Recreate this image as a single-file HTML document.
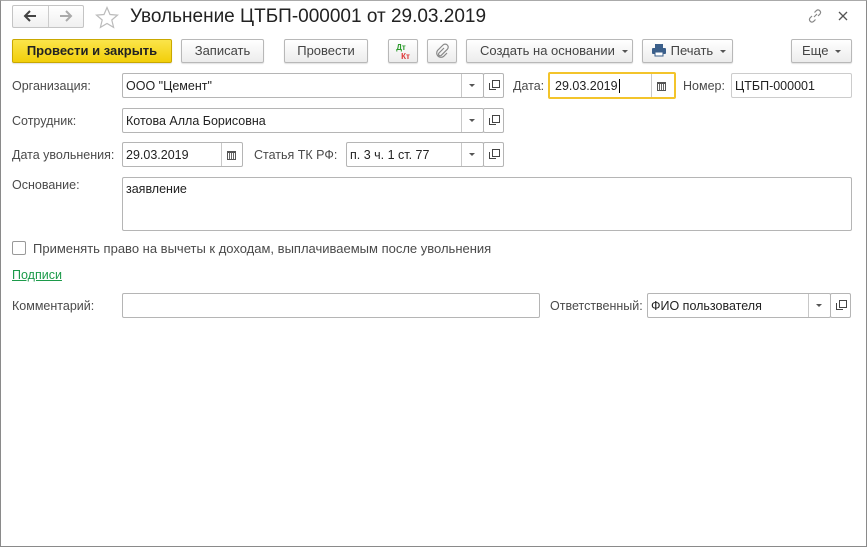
<!DOCTYPE html>
<html><head><meta charset="utf-8"><style>
*{box-sizing:border-box;margin:0;padding:0}
body{width:867px;height:547px;background:#fff;font-family:"Liberation Sans",Arial,sans-serif;font-size:12px;color:#333;position:relative;overflow:hidden}
.frame{position:absolute;left:0;top:0;width:867px;height:547px;border:1px solid #8a8a8a;border-top-color:#aaa}
.a{position:absolute}
.btn{position:absolute;top:39px;height:24px;border:1px solid #b8b8b8;border-radius:2px;background:linear-gradient(#fff,#ececec);text-align:center;line-height:22px;font-size:13px;color:#444;box-shadow:0 1px 1px rgba(0,0,0,.12)}
.inp{position:absolute;height:25px;border:1px solid #b5b5b5;border-radius:2px;background:#fff;line-height:25px;padding-left:3px;font-size:12.5px;color:#222}
.lbl{position:absolute;font-size:12.5px;color:#4a4a4a}
.sep{position:absolute;top:0;bottom:0;border-left:1px solid #c8c8c8}
.dd{position:absolute;top:10px;width:0;height:0;border-left:3px solid transparent;border-right:3px solid transparent;border-top:3px solid #555}
.ob{position:absolute;height:25px;width:21px;border:1px solid #b5b5b5;border-radius:2px;background:#fff}
.ob:before{content:"";position:absolute;left:8px;top:6px;width:6px;height:6px;border:1px solid #444}
.ob:after{content:"";position:absolute;left:5px;top:9px;width:6px;height:6px;border-left:1px solid #444;border-bottom:1px solid #444;background:transparent}
.cal{position:absolute;top:8px;width:9px;height:9px;border:1px solid #555;border-top-width:2px;background:repeating-linear-gradient(90deg,#fff 0 1px,#666 1px 2px)}
</style></head><body>
<div class="frame"></div>
<div class="a" style="left:12px;top:5px;width:72px;height:23px;border:1px solid #c4c4c4;border-radius:2px;background:linear-gradient(#fff,#f0f0f0)"></div>
<div class="a" style="left:48px;top:6px;height:21px;border-left:1px solid #ccc"></div>
<svg class="a" style="left:22px;top:9px" width="16" height="14"><path d="M14 7H3M8 2L3 7l5 5" stroke="#444" stroke-width="2" fill="none"/></svg>
<svg class="a" style="left:58px;top:9px" width="16" height="14"><path d="M2 7h11M8 2l5 5-5 5" stroke="#aaa" stroke-width="2" fill="none"/></svg>
<svg class="a" style="left:95px;top:6px" width="24" height="23"><path d="M12 1.5l3 7 7.5.6-5.7 4.9 1.8 7.4L12 17.5l-6.6 3.9 1.8-7.4L1.5 9.1l7.5-.6z" fill="none" stroke="#bbb" stroke-width="1.2"/></svg>
<div class="a" style="left:130px;top:6px;font-size:19px;color:#222;white-space:nowrap">Увольнение ЦТБП-000001 от 29.03.2019</div>
<svg class="a" style="left:807px;top:8px" width="16" height="16"><path d="M7 9l3-3M5 8L3 10a2.5 2.5 0 003.5 3.5L8.5 11.5M11 8l2-2A2.5 2.5 0 009.5 2.5L7.5 4.5" stroke="#888" stroke-width="1.2" fill="none"/></svg>
<svg class="a" style="left:838px;top:11px" width="10" height="10"><path d="M1 1l8 8M9 1L1 9" stroke="#555" stroke-width="1.3"/></svg>
<div class="btn" style="left:12px;width:160px;background:linear-gradient(#fbe54a,#f2cf0a);border-color:#c9a800;color:#222;font-weight:bold;font-size:13px">Провести и закрыть</div>
<div class="btn" style="left:181px;width:83px">Записать</div>
<div class="btn" style="left:284px;width:84px">Провести</div>
<div class="btn" style="left:388px;width:30px;font-size:8px;line-height:9px;font-weight:bold"><div style="color:#2a9a2a;margin:3px 0 0 -4px">Дт</div><div style="color:#d33;margin-left:5px">Кт</div></div>
<div class="btn" style="left:427px;width:30px"><svg width="14" height="16" style="margin-top:3px"><path d="M9 5l-5 5a1.6 1.6 0 002.3 2.3l6-6A3 3 0 008 2L2.5 7.5a4.3 4.3 0 006 6L12 10" stroke="#888" stroke-width="1.2" fill="none"/></svg></div>
<div class="btn" style="left:466px;width:167px;text-align:left;padding-left:13px">Создать на основании <span style="display:inline-block;margin-left:4px;border-left:3px solid transparent;border-right:3px solid transparent;border-top:3px solid #555;vertical-align:middle"></span></div>
<div class="btn" style="left:642px;width:91px;text-align:left;padding-left:8px"><svg width="16" height="14" style="vertical-align:-2px"><rect x="4" y="1" width="8" height="4" fill="#3b5f8a"/><rect x="1" y="5" width="14" height="6" rx="1" fill="#3b5f8a"/><rect x="4" y="9" width="8" height="4" fill="#fff" stroke="#3b5f8a"/></svg> Печать <span style="display:inline-block;margin-left:3px;border-left:3px solid transparent;border-right:3px solid transparent;border-top:3px solid #555;vertical-align:middle"></span></div>
<div class="btn" style="left:791px;width:61px">Еще <span style="display:inline-block;margin-left:3px;border-left:3px solid transparent;border-right:3px solid transparent;border-top:3px solid #555;vertical-align:middle"></span></div>
<div class="lbl" style="left:12px;top:79px">Организация:</div>
<div class="inp" style="left:122px;top:73px;width:362px">ООО "Цемент"<div class="sep" style="left:338px"></div><div class="dd" style="left:346px"></div></div>
<div class="ob" style="left:483px;top:73px"></div>
<div class="lbl" style="left:513px;top:79px">Дата:</div>
<div class="inp" style="left:548px;top:72px;width:128px;height:27px;border:2px solid #f3c42b;line-height:25px;padding-left:5px">29.03.2019<span style="border-left:1px solid #000;margin-left:1px"></span><div class="sep" style="left:101px"></div><div class="cal" style="left:107px"></div></div>
<div class="lbl" style="left:683px;top:79px">Номер:</div>
<div class="inp" style="left:731px;top:73px;width:121px;border-color:#ccc">ЦТБП-000001</div>
<div class="lbl" style="left:12px;top:114px">Сотрудник:</div>
<div class="inp" style="left:122px;top:108px;width:362px">Котова Алла Борисовна<div class="sep" style="left:338px"></div><div class="dd" style="left:346px"></div></div>
<div class="ob" style="left:483px;top:108px"></div>
<div class="lbl" style="left:12px;top:148px">Дата увольнения:</div>
<div class="inp" style="left:122px;top:142px;width:121px">29.03.2019<div class="sep" style="left:98px"></div><div class="cal" style="left:104px"></div></div>
<div class="lbl" style="left:254px;top:148px">Статья ТК РФ:</div>
<div class="inp" style="left:346px;top:142px;width:138px">п. 3 ч. 1 ст. 77<div class="sep" style="left:114px"></div><div class="dd" style="left:122px"></div></div>
<div class="ob" style="left:483px;top:142px"></div>
<div class="lbl" style="left:12px;top:178px">Основание:</div>
<div class="inp" style="left:122px;top:177px;width:730px;height:54px;line-height:20px;padding-top:1px">заявление</div>
<div class="a" style="left:12px;top:241px;width:14px;height:14px;border:1px solid #999;border-radius:2px"></div>
<div class="lbl" style="left:33px;top:241px;font-size:13px">Применять право на вычеты к доходам, выплачиваемым после увольнения</div>
<div class="lbl" style="left:12px;top:268px;color:#1c9a4a;text-decoration:underline">Подписи</div>
<div class="lbl" style="left:12px;top:299px">Комментарий:</div>
<div class="inp" style="left:122px;top:293px;width:418px"></div>
<div class="lbl" style="left:550px;top:299px">Ответственный:</div>
<div class="inp" style="left:647px;top:293px;width:184px">ФИО пользователя<div class="sep" style="left:160px"></div><div class="dd" style="left:168px"></div></div>
<div class="ob" style="left:830px;top:293px"></div>
</body></html>
